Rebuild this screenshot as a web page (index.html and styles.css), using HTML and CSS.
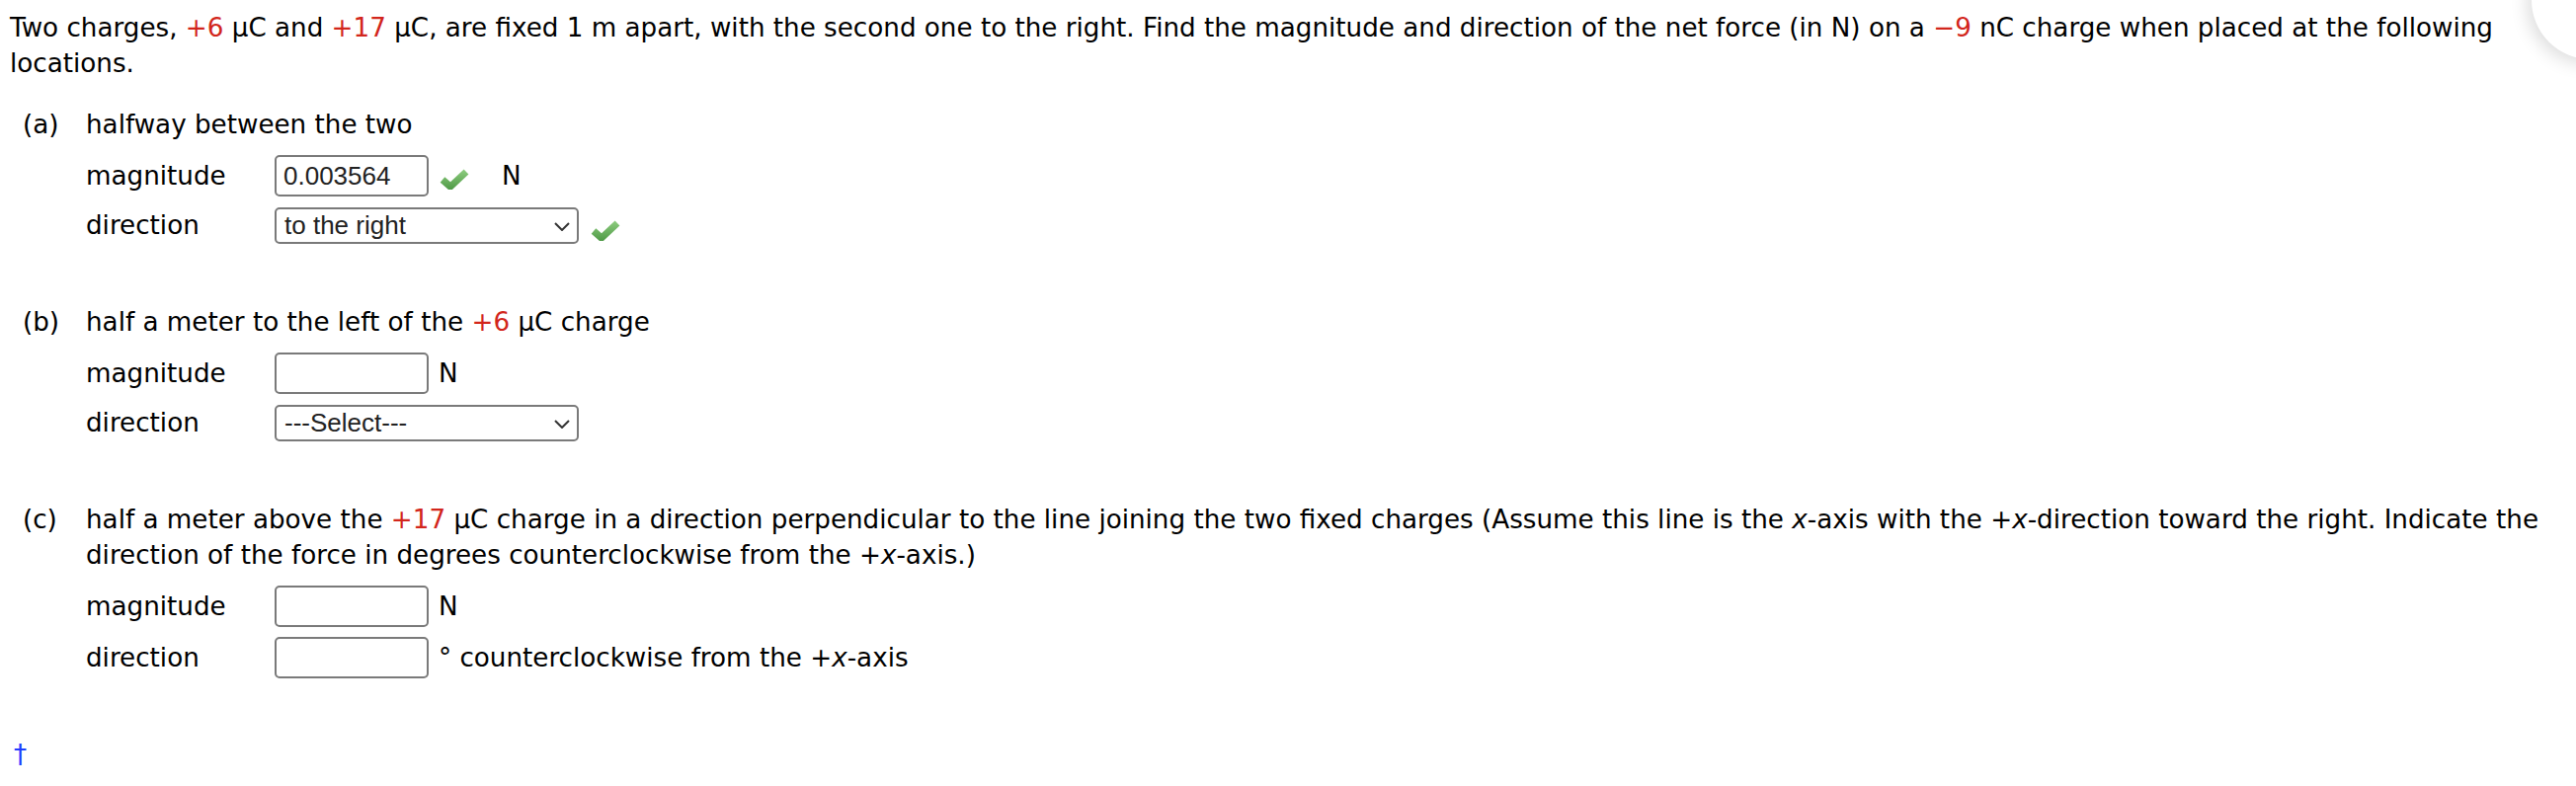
FILE: index.html
```html
<!DOCTYPE html>
<html lang="en">

<head>
    <meta charset="UTF-8">
    <title>Point Charges - Question</title>
    <link rel="stylesheet" href="styles.css">
</head>

<body>
    <div class="corner-shadow"></div>

    <!-- shared gradient for the green checkmarks -->
    <svg class="defs-only" width="0" height="0">
        <defs>
            <linearGradient id="checkGrad" x1="0" y1="0" x2="0" y2="22" gradientUnits="userSpaceOnUse">
                <stop offset="0" stop-color="#93d184"/>
                <stop offset="1" stop-color="#4f9a46"/>
            </linearGradient>
        </defs>
    </svg>

    <div class="question">
        <p class="stem">Two charges, <span class="red">+6</span> μC and <span class="red">+17</span> μC, are fixed 1 m apart, with the second one to the right. Find the magnitude and direction of the net force (in N) on a <span class="red">−9</span> nC charge when placed at the following locations.</p>

        <!-- part (a) -->
        <div class="part">
            <span class="part-label">(a)</span>
            <div class="part-body">
                <p class="part-text">halfway between the two</p>
                <div class="answers">
                    <span class="field-label">magnitude</span>
                    <div class="field">
                        <input class="num-box" type="text" value="0.003564" readonly>
                        <svg class="check" viewBox="0 0 32 22">
                            <path d="M4 12 L12 19 L28 4" fill="none" stroke="url(#checkGrad)" stroke-width="7" stroke-linejoin="round"/>
                        </svg>
                        <span class="unit unit-after-check">N</span>
                    </div>

                    <span class="field-label">direction</span>
                    <div class="field">
                        <div class="select-box">
                            <span>to the right</span>
                            <svg class="chevron" viewBox="0 0 16 9"><path d="M1 1 L8 8 L15 1" fill="none" stroke="#333" stroke-width="2"/></svg>
                        </div>
                        <svg class="check check-low" viewBox="0 0 32 22">
                            <path d="M4 12 L12 19 L28 4" fill="none" stroke="url(#checkGrad)" stroke-width="7" stroke-linejoin="round"/>
                        </svg>
                    </div>
                </div>
            </div>
        </div>

        <!-- part (b) -->
        <div class="part">
            <span class="part-label">(b)</span>
            <div class="part-body">
                <p class="part-text">half a meter to the left of the <span class="red">+6</span> μC charge</p>
                <div class="answers">
                    <span class="field-label">magnitude</span>
                    <div class="field">
                        <input class="num-box" type="text" value="">
                        <span class="unit">N</span>
                    </div>

                    <span class="field-label">direction</span>
                    <div class="field">
                        <div class="select-box">
                            <span>---Select---</span>
                            <svg class="chevron" viewBox="0 0 16 9"><path d="M1 1 L8 8 L15 1" fill="none" stroke="#333" stroke-width="2"/></svg>
                        </div>
                    </div>
                </div>
            </div>
        </div>

        <!-- part (c) -->
        <div class="part">
            <span class="part-label">(c)</span>
            <div class="part-body">
                <p class="part-text">half a meter above the <span class="red">+17</span> μC charge in a direction perpendicular to the line joining the two fixed charges (Assume this line is the <i>x</i>-axis with the +<i>x</i>-direction toward the right. Indicate the direction of the force in degrees counterclockwise from the +<i>x</i>-axis.)</p>
                <div class="answers answers-loose">
                    <span class="field-label">magnitude</span>
                    <div class="field">
                        <input class="num-box" type="text" value="">
                        <span class="unit">N</span>
                    </div>

                    <span class="field-label">direction</span>
                    <div class="field">
                        <input class="num-box" type="text" value="">
                        <span class="unit">° counterclockwise from the +<i>x</i>-axis</span>
                    </div>
                </div>
            </div>
        </div>

        <p class="footnote">†</p>
    </div>
</body>

</html>
```

FILE: styles.css
```css
* {
    margin: 0;
    padding: 0;
    box-sizing: border-box;
}

body {
    font-family: "DejaVu Sans", Verdana, sans-serif;
    font-size: 26.2px;
    line-height: 36px;
    color: #000;
    background-color: #fff;
    padding: 10px 8px 0 10px;
    overflow: hidden;
}

.red {
    color: #d2261c;
}

.defs-only {
    position: absolute;
}

.corner-shadow {
    position: fixed;
    top: -60px;
    right: -75px;
    width: 120px;
    height: 120px;
    border-radius: 50%;
    background-color: #fff;
    box-shadow: -4px 4px 18px rgba(0, 0, 0, 0.14);
}

.stem {
    margin-bottom: 26px;
}

.part {
    display: flex;
    padding-left: 13px;
    margin-bottom: 59px;
}

.part-label {
    width: 64px;
    flex-shrink: 0;
}

.part-body {
    flex: 1;
}

.part-text {
    margin-bottom: 13px;
}

.answers {
    display: grid;
    grid-template-columns: 191px auto;
    grid-auto-rows: 42px;
    row-gap: 8px;
    align-items: center;
}

.answers-loose {
    row-gap: 10px;
}

.field {
    display: flex;
    align-items: center;
}

.num-box {
    width: 156px;
    height: 42px;
    border: 2px solid #7a7a7a;
    border-radius: 5px;
    padding: 0 7px;
    font-family: "Liberation Sans", Arial, sans-serif;
    font-size: 26px;
    color: #222;
    background: #fff;
}

.select-box {
    position: relative;
    width: 308px;
    height: 37px;
    border: 2px solid #7a7a7a;
    border-radius: 5px;
    padding-left: 8px;
    display: flex;
    align-items: center;
    font-family: "Liberation Sans", Arial, sans-serif;
    font-size: 26px;
    color: #222;
}

.chevron {
    position: absolute;
    right: 7px;
    top: 13px;
    width: 16px;
    height: 9px;
}

.check {
    width: 32px;
    height: 22px;
    margin-left: 10px;
    margin-top: 6px;
}

.check-low {
    margin-left: 11px;
    margin-top: 10px;
}

.unit {
    margin-left: 10px;
}

.unit-after-check {
    margin-left: 32px;
}

.footnote {
    color: #1f3dff;
    padding-left: 4px;
    margin-top: 4px;
}
```
